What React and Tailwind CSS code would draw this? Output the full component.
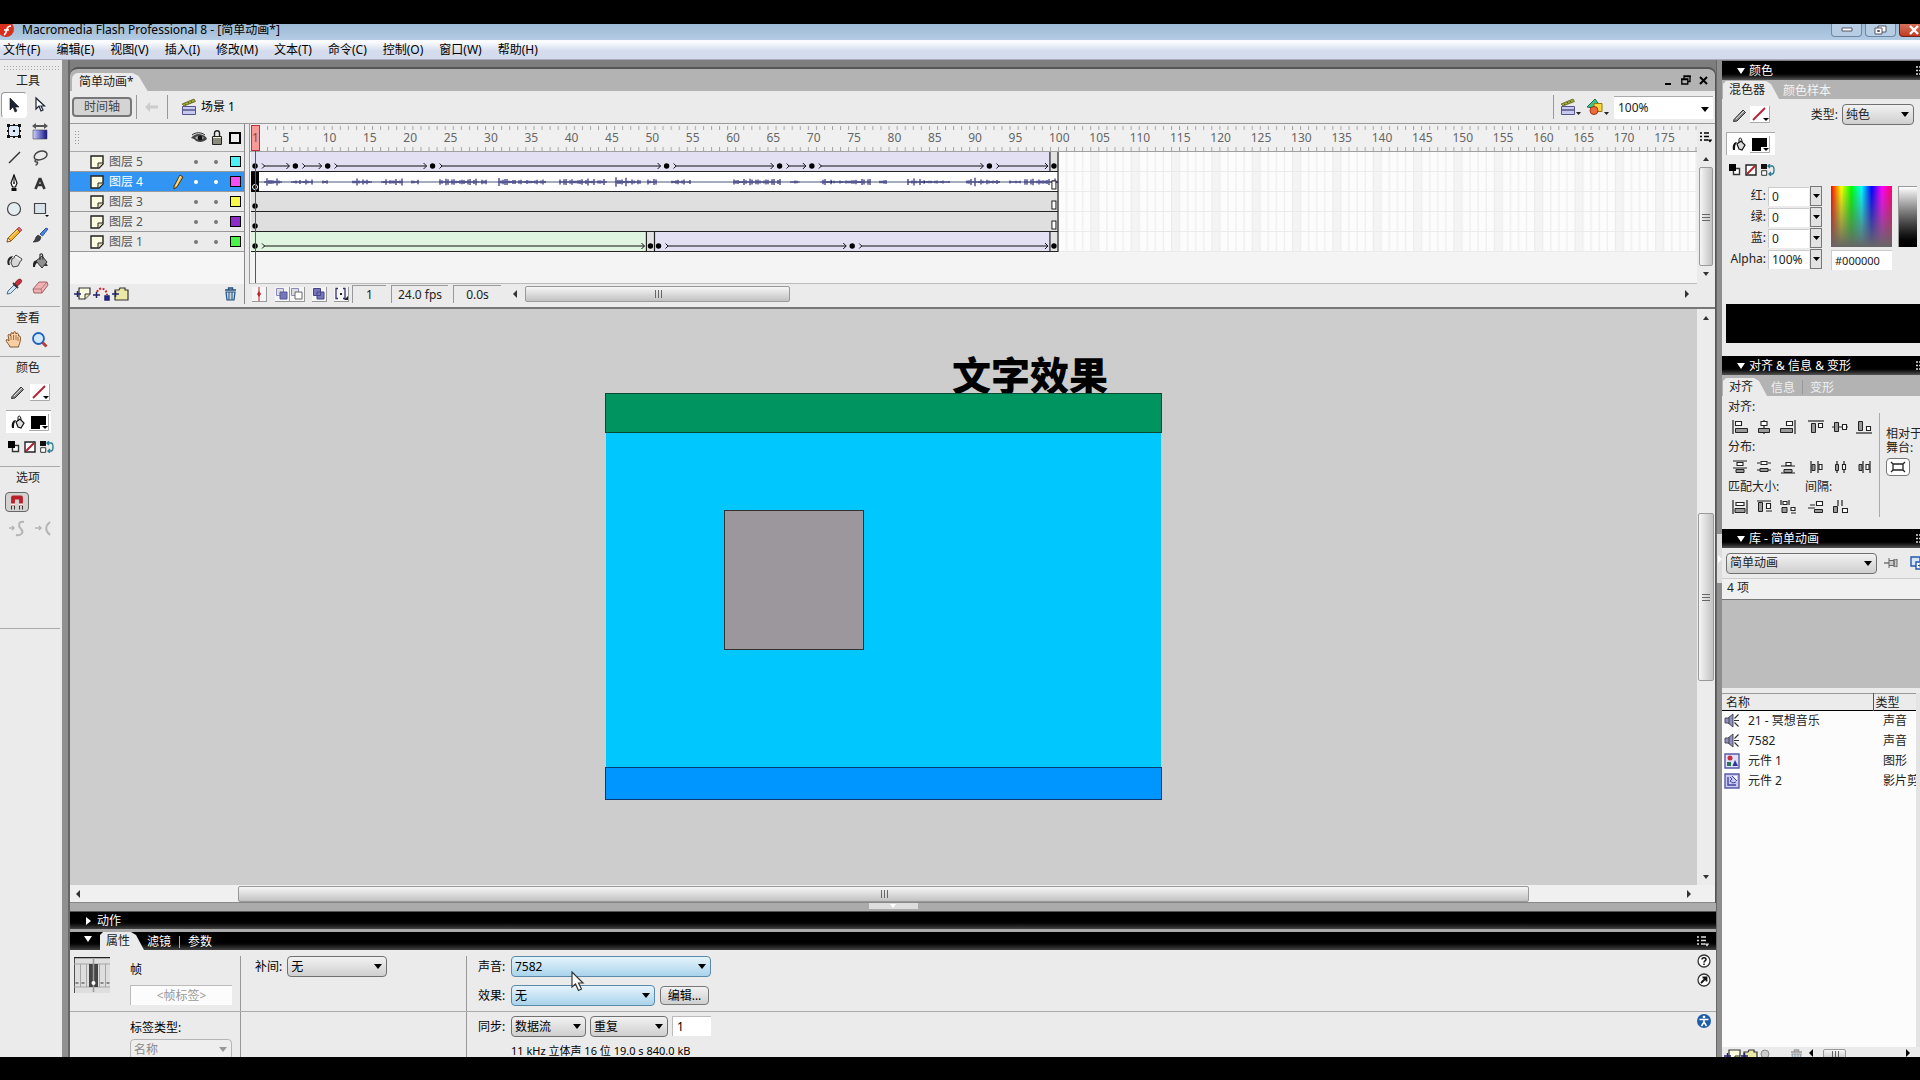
import React from "react";

const FRAME = 8.07;
const fx = (n) => 1 + (n - 1) * FRAME;
const mid = (n) => fx(n) + FRAME / 2;

const MENUS = ["文件(F)", "编辑(E)", "视图(V)", "插入(I)", "修改(M)", "文本(T)", "命令(C)", "控制(O)", "窗口(W)", "帮助(H)"];

const LAYERS = [
  { name: "图层 5", color: "bg-[#4ff0f4]" },
  { name: "图层 4", color: "bg-[#f44ff4]", active: true },
  { name: "图层 3", color: "bg-[#f8f84a]" },
  { name: "图层 2", color: "bg-[#8f2bc8]" },
  { name: "图层 1", color: "bg-[#4af24a]" },
];

const LIBRARY = [
  { name: "21 - 冥想音乐", type: "声音", icon: "sound" },
  { name: "7582", type: "声音", icon: "sound" },
  { name: "元件 1", type: "图形", icon: "graphic" },
  { name: "元件 2", type: "影片剪辑", icon: "clip" },
];

/* ---------- icons ---------- */

const Svg = ({ w = 18, h = 18, children, className = "" }) => (
  <svg width={w} height={h} viewBox={`0 0 ${w} ${h}`} fill="none" className={`block shrink-0 ${className}`} aria-hidden="true">
    {children}
  </svg>
);

const Down = ({ className = "text-black" }) => (
  <Svg w={8} h={5} className={className}><path d="M0 0h8L4 5z" fill="currentColor" /></Svg>
);
const Tri = ({ dir, className = "text-[#333]" }) => (
  <Svg w={8} h={8} className={className}>
    <path d={{ up: "M1 6l3-4 3 4z", down: "M1 2l3 4 3-4z", left: "M6 0L2 4l4 4z", right: "M2 0l4 4-4 4z" }[dir]} fill="currentColor" />
  </Svg>
);

const TOOLS = [
  ["选择", <Svg><path d="M5 2v12l3-3 2 5 2-1-2-4h4z" fill="#1a2436" stroke="#111" strokeWidth=".6" /></Svg>],
  ["部分选取", <Svg><path d="M5 2v11l3-3 2 5 2-1-2-4h3.500z" fill="#fff" stroke="#1a2436" strokeWidth="1.2" /></Svg>],
  ["任意变形", <Svg><path d="M3.500 3.500h11v11h-11z" stroke="#222" fill="#dcebf7" /><path d="M2 2h3v3H2zM13 2h3v3h-3zM2 13h3v3H2zM13 13h3v3h-3zM8 2h2v2H8zM8 14h2v2H8zM2 8h2v2H2zM14 8h2v2h-2zM8 8h2v2H8z" fill="#111" /></Svg>],
  ["填充变形", <Svg><defs><linearGradient id="ft"><stop stopColor="#cfd3ff" /><stop offset="1" stopColor="#10108a" /></linearGradient></defs><path d="M2 8h14v9H2z" fill="url(#ft)" stroke="#445" strokeWidth=".6" /><path d="M1 4l4-3v2h8V1l4 3-4 3V5H5v2z" fill="#555" /></Svg>],
  ["线条", <Svg><path d="M4 15L15 4" stroke="#333" strokeWidth="1.400" /></Svg>],
  ["套索", <Svg><path d="M5 12c-3-2-2-6 2-8 4-1.800 9-1 9 2.500S9 13 5.500 11.500c-2 0-2 3 0 2.500 2-.6 1 3-1 3" stroke="#444" strokeWidth="1.400" /></Svg>],
  ["钢笔", <Svg><path d="M9 1L6 9l1.500 4h3L12 9z" fill="#fff" stroke="#111" strokeWidth="1.200" /><path d="M9 1v7" stroke="#111" /><circle cx="9" cy="9" r="1" fill="#111" /><path d="M6.500 14h5v3h-5z" fill="#111" /></Svg>],
  ["文本", <Svg><path d="M9 4L4.500 15M9 4l4.500 11M6 11h6" stroke="#333" strokeWidth="2.600" /></Svg>],
  ["椭圆", <Svg><circle cx="9" cy="9" r="6.500" fill="#e3eef1" stroke="#444" strokeWidth="1.200" /></Svg>],
  ["矩形", <Svg><path d="M3.500 3.500h11v10h-11z" fill="#d8e4ea" stroke="#444" strokeWidth="1.200" /><path d="M14 15h4l-2 2z" fill="#000" /></Svg>],
  ["铅笔", <Svg><path d="M3 12L12 3l3 3-9 9-4 1z" fill="#f4b228" stroke="#8a4c0c" strokeWidth=".8" /><path d="M12 3l2-2 3 3-2 2z" fill="#d9646a" stroke="#8a2c2c" strokeWidth=".6" /><path d="M2 16l1-4 3 3z" fill="#fbe6c0" stroke="#70400f" strokeWidth=".7" /><path d="M5 12l8-8" stroke="#ffe28a" /></Svg>],
  ["刷子", <Svg><path d="M9 8l6-6 2 1-5.500 7z" fill="#4a86e0" stroke="#1c3c90" strokeWidth=".8" /><path d="M7 9l3 2-1 3c-2 2-5 2-7 2 2-1 2-3 3-5z" fill="#3d4048" stroke="#222" strokeWidth=".6" /></Svg>],
  ["墨水瓶", <Svg><path d="M3 13c-2-5 1-9 5-9l-2 3c-2 1-2 4-1 6z" fill="#222" /><path d="M7 7l5-3 4 4-3 6-5 1-2-4z" fill="#d8d8d8" stroke="#444" /><path d="M9 5l2-2 6 4-1 2" stroke="#444" fill="#eee" /></Svg>],
  ["颜料桶", <Svg><path d="M2 15c0-4 0-6 4-7l1 2c-2 1-3 3-3 5z" fill="#222" /><path d="M5 9l6-5 5 6-5 6z" fill="#8f8f8f" stroke="#333" /><path d="M9 8V2.500c2-2 3 0 3 5" stroke="#333" strokeWidth="1.200" /><path d="M15 11l2 3h-4z" fill="#333" /></Svg>],
  ["滴管", <Svg><path d="M3 13l6-6 2.500 2.500-6 6L2 16z" fill="#cfe6f5" stroke="#40607c" strokeWidth=".9" /><path d="M8 5l5 5" stroke="#333" strokeWidth="1.800" /><path d="M10 6c0-2 3-5 5-5 3 1 2 4-3 7z" fill="#c3323c" stroke="#5c1016" strokeWidth=".7" /></Svg>],
  ["橡皮擦", <Svg><path d="M2 11l6-7h8l1 3-6 8H3z" fill="#efb1b3" stroke="#96565a" strokeWidth=".9" /><path d="M2 11h8l6-7M10 11l1 4" stroke="#a9686c" strokeWidth=".8" /></Svg>],
];

const Hand = () => <Svg><path d="M5 16c-1-3-4-5-4-7 1-1 2 0 3 1L3 4c1-1.500 2 0 2.500 1L6 2c1-1 2 0 2 1l1-2c1-1 2 0 2 2l1-1c1 0 2 1 1.500 3l1 0c1 0 1 1 1 3 0 4-2 6-2 8z" fill="#f8cfa2" stroke="#7a4a24" strokeWidth=".9" /><path d="M6 5v4M8.500 4v5M11 4v5M13 6v4" stroke="#7a4a24" strokeWidth=".7" /></Svg>;
const Zoom = () => <Svg><circle cx="7.500" cy="7.500" r="5.500" fill="#cfeaff" stroke="#1f62c0" strokeWidth="1.800" /><path d="M11.500 11.500l4 4" stroke="#b04038" strokeWidth="3" /></Svg>;
const StrokePen = () => <Svg w={16} h={16}><path d="M2 12.500L11 3l2.500 2.500L5 14l-3.500.5z" fill="#888" stroke="#333" /><path d="M4 12l8-8" stroke="#ddd" /></Svg>;
const Bucket = () => <Svg w={16} h={16}><path d="M2 14C1 9 3 6 6 6l-1 2c-1 1-1 4-1 6z" fill="#111" /><path d="M6 8l4-3 4 4-3 5-3-1z" fill="#ddd" stroke="#111" strokeWidth="1.200" /><path d="M8 7V3c1-2 3-1 3 3" stroke="#111" /></Svg>;
const NoneSwatch = () => <Svg w={20} h={17}><path d="M0 0h20v17H0z" fill="#fff" /><path d="M19.500 0v16.500H0" stroke="#aaa" /><path d="M3 14L15 2" stroke="#b4243c" strokeWidth="2" /><path d="M13 12h6l-3 3z" fill="#000" /></Svg>;
const BlackSwatch = () => <Svg w={20} h={17}><path d="M0 0h20v17H0z" fill="#fff" /><path d="M19.500 0v16.500H0" stroke="#aaa" /><path d="M2 2h15v13H2z" fill="#000" /><path d="M11 11h8v5h-8z" fill="#fff" /><path d="M13 12h6l-3 3z" fill="#000" /></Svg>;
const BwIcon = () => <Svg w={12} h={12}><path d="M4.500 4.500h6v6h-6z" fill="#fff" stroke="#333" strokeWidth="1.400" /><path d="M0 0h7v7H0z" fill="#000" /></Svg>;
const NoColor = () => <Svg w={12} h={12}><path d="M1 1h10v10H1z" fill="#fff" stroke="#222" strokeWidth="1.400" /><path d="M2 10l8-8" stroke="#b4202c" strokeWidth="2" /></Svg>;
const SwapIcon = () => <Svg w={14} h={12}><path d="M0 0h6v5H0z" fill="#111" /><path d="M.7 6.700h5v4.600h-5z" fill="#fff" stroke="#333" /><path d="M7 2h4c2 0 2 3 2 4s0 4-2 4H8M9 0L7 2l2 2M10 8l-2 2 2 2" stroke="#2c7f92" strokeWidth="1.400" /></Svg>;
const Magnet = () => <Svg w={16} h={16}><path d="M4 12V3.500h8V12" stroke="#b81f28" strokeWidth="3.800" strokeLinejoin="round" /><path d="M2 10.500h4M10 10.500h4" stroke="#eee" strokeWidth="2" /><path d="M2.500 12v3.500M5.500 12v3.500M10.500 12v3.500M13.500 12v3.500" stroke="#333" /></Svg>;
const Smooth = () => <Svg w={18} h={18}><path d="M1 8h5M4 6l2 2-2 2" stroke="#b5b5b5" strokeWidth="1.500" /><path d="M16 2c-6-1-6 4-3 7s1 7-5 6" stroke="#b5b5b5" strokeWidth="2" /></Svg>;
const Straighten = () => <Svg w={18} h={18}><path d="M1 8h6M5 6l2 2-2 2" stroke="#b5b5b5" strokeWidth="1.500" /><path d="M16 2c-5 4-5 9 0 13" stroke="#b5b5b5" strokeWidth="2" /></Svg>;

const Clapper = () => <Svg w={16} h={18}><path d="M1.500 8.500h13v8h-13z" fill="#c9c9ef" stroke="#55558c" /><path d="M2 12h12" stroke="#55558c" strokeWidth="1.500" /><path d="M1 6l12-5 1.500 2.500L3 8z" fill="#a3a83a" stroke="#5e6420" strokeWidth=".8" /><path d="M4 5.500l1 1.500M7 4l1 1.500M10 3l1 1.500" stroke="#4e5418" /></Svg>;
const Shapes = () => <Svg w={18} h={18}><path d="M1 9l8-8 3 4-4 5z" fill="#3fc58a" stroke="#1a6c4c" /><path d="M8 5.500h8v8H8z" fill="#f5d83c" stroke="#93780f" /><circle cx="8" cy="12.500" r="4" fill="#ee6a3c" stroke="#9a3416" /></Svg>;
const LayerPage = () => <Svg w={14} h={14}><path d="M1 1h12v8l-4 4H1z" fill="#fbfbe2" stroke="#222" strokeWidth="1.400" /><path d="M13 8H8v5" fill="#e5e5b4" stroke="#222" /></Svg>;
const LayerPencil = () => <Svg w={12} h={16}><path d="M2 12L8 1l3 2-6 10-3 2z" fill="#f0b848" stroke="#3c2c10" strokeWidth=".9" /><path d="M8.500 2L4 12" stroke="#fff0b0" /></Svg>;
const Eye = () => <Svg w={16} h={12}><path d="M0 6c4-5 10-5 15-1l1 2c-4 4-10 4-13 0z" fill="#444" /><path d="M4 6c3-3 6-3 9 0-3 2-6 2-9 0z" fill="#bbb" /><circle cx="9" cy="6" r="2.400" fill="#111" /><path d="M1 3c4-3 9-3 13 0" stroke="#222" /></Svg>;
const Lock = () => <Svg w={12} h={15}><path d="M3.500 7V3c0-3 5-3 5 0v4" stroke="#222" strokeWidth="1.400" /><path d="M1.500 6.500h9v8h-9z" fill="#f4f4d8" stroke="#222" /><path d="M2 9h8M2 11h8M2 13h8" stroke="#222" /></Svg>;
const NewLayer = () => <Svg w={17} h={14}><path d="M5 1h11v6l-5 5H5z" fill="#fbfbe2" stroke="#333" strokeWidth="1.200" /><path d="M16 7h-5v5" stroke="#333" fill="#e5e5b4" /><path d="M0 7h7M3.500 4v6" stroke="#22226c" strokeWidth="1.500" /></Svg>;
const NewGuide = () => <Svg w={17} h={14}><path d="M4 5c2-5 9-5 10 3" stroke="#d02030" strokeWidth="2" strokeDasharray="2 1.500" /><path d="M0 8h7M3.500 5v6M12 9h4v4h-4z" stroke="#22226c" strokeWidth="1.500" fill="#22a" /></Svg>;
const NewFolder = () => <Svg w={17} h={14}><path d="M3 3h4l1-2h5v2h3v10H3z" fill="#ece9a8" stroke="#333" strokeWidth="1.200" /><path d="M0 7h7M3.500 4v6" stroke="#22226c" strokeWidth="1.500" /></Svg>;
const Trash = ({ c = "#24507c" }) => <Svg w={13} h={14}><path d="M1 3h11M4.500 3V1h4v2" stroke={c} strokeWidth="1.400" /><path d="M2 5h9l-1 8H3z" fill="#c7dcea" stroke={c} strokeWidth="1.200" /><path d="M5 5v8M8 5v8" stroke={c} /></Svg>;
const MenuGlyph = ({ className = "text-black" }) => <Svg w={12} h={11} className={className}><path d="M0 1h2M4 1h5M0 4.500h2M4 4.500h5M0 8h2M4 8h4" stroke="currentColor" strokeWidth="1.400" /><path d="M7.500 7.500h5L10 10.500z" fill="currentColor" /></Svg>;
const SoundIcon = () => <Svg w={16} h={15}><path d="M1 5h3l5-4v13L4 10H1z" fill="#8f8fc4" stroke="#444" strokeWidth=".9" /><path d="M5 4v7" stroke="#444" /><path d="M10 7.500h5M10.500 5.500l4-4M10.500 9.500l4 4" stroke="#333" strokeWidth="1.100" /></Svg>;
const GraphicIcon = () => <Svg w={16} h={16}><path d="M1 1h14v14H1z" fill="#dfe0fa" stroke="#5a5aa8" strokeWidth="1.400" /><circle cx="6" cy="5" r="2.500" fill="#c6303a" /><path d="M3 9h4v4H3z" fill="#24784c" /><path d="M11 7l3 6H8.500z" fill="#3434a0" /></Svg>;
const ClipIcon = () => <Svg w={16} h={16}><path d="M1 1h14v14H1z" fill="#c9caf2" stroke="#5a5aa8" strokeWidth="1.400" /><path d="M4 4v8h8" stroke="#4646a0" strokeWidth="1.400" /><path d="M6 4l2 2-2 2 3 2 3-1" stroke="#4646a0" /><path d="M9 3h4v4z" fill="#fff" /><path d="M8 3l5 5" stroke="#4646a0" /></Svg>;
const Pin = () => <Svg w={14} h={12}><path d="M0 6h5" stroke="#555" strokeWidth="1.200" /><path d="M5 1v10M5 3.500h5v5H5M10 2c1 1 2 1 3 0v8c-1-1-2-1-3 0z" fill="#ccc" stroke="#666" /></Svg>;
const NewLib = () => <Svg w={14} h={14}><path d="M1 1h9v9H1z" fill="#d4e6fa" stroke="#2458b0" strokeWidth="1.400" /><path d="M6 6h8v7H6z" fill="#fff" stroke="#2458b0" strokeWidth="1.400" /><path d="M8 9.500h5M10 7.500v4" stroke="#2458b0" /></Svg>;

const L = "#222";
const G = "#9a9a9a";
const A = ({ line, hollow, solid }) => (
  <Svg w={16} h={14}>
    <path d={solid} fill={G} stroke={L} />
    <path d={hollow} fill="#fff" stroke={L} strokeWidth="1.100" />
    <path d={line} stroke={L} strokeWidth="1.200" />
  </Svg>
);
const ALIGN_ROWS = [
  [
    { line: "M1 0v14", hollow: "M3.500 1.500h6v4h-6z", solid: "M3.500 8.500h12v4h-12z" },
    { line: "M8 0v2M8 5v3M8 12v2", hollow: "M5 1.500h6v4H5z", solid: "M2.500 8.500h11v4h-11z" },
    { line: "M15 0v14", hollow: "M6.500 1.500h6v4h-6z", solid: "M.5 8.500h12v4H.5z" },
    { line: "M0 1h16", hollow: "M10.500 3.500h4v4h-4z", solid: "M3.500 3.500h4v9h-4z" },
    { line: "M0 7h2M7 7h3M14 7h2", hollow: "M10.500 4.500h4v5h-4z", solid: "M2.500 2.500h4v9h-4z" },
    { line: "M0 13h16", hollow: "M10.500 6.500h4v4h-4z", solid: "M2.500 1.500h4v9h-4z" },
  ],
  [
    { line: "M1 1h14M1 8h14", hollow: "M5 2.500h6v3H5z", solid: "M4 9.500h8v3H4z" },
    { line: "M1 3h3M12 3h3M1 10h3M12 10h3", hollow: "M5 1.500h6v3H5z", solid: "M4 8.500h8v3H4z" },
    { line: "M1 6h14M1 13h14", hollow: "M6 2.500h5v3H6z", solid: "M4 9.500h8v3H4z" },
    { line: "M3 1v12M10 1v12", hollow: "M11 4.500h3v5h-3z", solid: "M4 4.500h3v6H4z" },
    { line: "M5 1v3M5 11v2M12 1v3M12 10v3", hollow: "M10.500 4.500h3v5h-3z", solid: "M3.500 4.500h3v6h-3z" },
    { line: "M7 1v12M14 1v12", hollow: "M10 4.500h3v5h-3z", solid: "M3 4.500h3v6H3z" },
  ],
  [
    { line: "M1 0v14M15 0v14", hollow: "M4 2.500h8v3H4z", solid: "M3 8.500h10v4H3z" },
    { line: "M1 1h14M10 11h6", hollow: "M10.500 3.500h4v5h-4z", solid: "M2.500 2.500h4v9h-4z" },
    { line: "M1 0v5M9 0v5M11 13h5", hollow: "M3 1.500h4v3H3zM11 7.500h4v3h-4z", solid: "M2 7.500h5v5H2z" },
    { line: "M0 8h7M2 5h5", hollow: "M8.500 1.500h6v4h-6z", solid: "M6.500 9.500h8v3h-8z" },
    { line: "M6 0v6M10 0v6", hollow: "M10.500 8.500h5v4h-5z", solid: "M1.500 6.500h4v6h-4z" },
  ],
];

/* ---------- shared controls ---------- */

const TONES = {
  gray: "border-[#707070] bg-linear-to-b from-[#f2f2f2] to-[#cfcfcf]",
  blue: "border-[#5b8aa8] bg-linear-to-b from-[#e6f4fc] to-[#a9d3ec]",
  off: "border-[#b5b5b5] bg-[#eeeeee] text-[#8a8a8a]",
};

function Select({ label, value, tone = "gray", className = "" }) {
  return (
    <span className={`relative block h-[21px] shrink-0 ${className}`}>
      <select aria-label={label} defaultValue={value} disabled={tone === "off"} className={`block h-full w-full appearance-none rounded-sm border pr-4 pl-[3px] leading-4 outline-none ${TONES[tone]}`}>
        <option>{value}</option>
      </select>
      <span className="pointer-events-none absolute top-2 right-[5px]">
        <Down className={tone === "off" ? "text-[#999]" : "text-black"} />
      </span>
    </span>
  );
}

const PanelTitle = ({ children }) => (
  <div className="flex h-[19px] items-center bg-linear-to-b from-black from-60% to-[#555] pl-[15px] text-white">
    <Svg w={8} h={6}><path d="M0 0h8L4 6z" fill="#fff" /></Svg>
    <h2 className="ml-1 flex-1 leading-4 whitespace-nowrap">{children}</h2>
    <Svg w={4} h={10}><path d="M0 1h2M3 1h1M0 4.500h2M3 4.500h1M0 8h2M3 8h1" stroke="#ddd" strokeWidth="1.400" /></Svg>
  </div>
);

const Tab = ({ children, className = "" }) => (
  <button className={`flex h-[18px] items-center bg-[#ebebeb] pr-3.5 pl-1.5 whitespace-nowrap text-[#222] [clip-path:polygon(0_3px,3px_0,calc(100%-13px)_0,calc(100%-8px)_3px,100%_100%,0_100%)] ${className}`}>
    {children}
  </button>
);

const ColorExtras = ({ className = "" }) => (
  <div className={`flex items-center gap-1 ${className}`}>
    <button aria-label="黑白"><BwIcon /></button>
    <button aria-label="没有颜色"><NoColor /></button>
    <button aria-label="交换颜色"><SwapIcon /></button>
  </div>
);

/* ---------- left toolbar ---------- */

function Toolbox() {
  return (
    <aside className="w-[62px] shrink-0 bg-[#ebebeb] pt-[5px] text-center">
      <div className="mx-[3px] h-[5px] bg-[radial-gradient(#aaa_1px,transparent_1px)] bg-size-[3px_3px]" />
      <h2 className="mt-[3px] w-14 leading-4">工具</h2>
      <div className="mt-[3px] ml-px grid w-[52px] grid-cols-2">
        {TOOLS.map(([name, icon], i) => (
          <button key={name} aria-label={name} className={`flex h-[26px] items-center justify-center ${i === 0 ? "rounded-sm border border-t-[#999] border-r-white border-b-white border-l-[#999] bg-white" : ""}`}>
            {icon}
          </button>
        ))}
      </div>
      <section className="mt-1.5 mr-0.5 border-t border-[#aaa]">
        <h2 className="mt-[3px] w-14 leading-4">查看</h2>
        <div className="ml-px grid h-7 w-[52px] grid-cols-2 place-items-center">
          <button aria-label="手形"><Hand /></button>
          <button aria-label="缩放"><Zoom /></button>
        </div>
      </section>
      <section className="mt-0.5 mr-0.5 h-[110px] border-t border-[#aaa]">
        <h2 className="mt-[3px] w-14 leading-4">颜色</h2>
        <div className="ml-2.5 flex h-8 items-center gap-1">
          <StrokePen /><button aria-label="笔触颜色"><NoneSwatch /></button>
        </div>
        <div className="mt-0.5 ml-1.5 flex h-[23px] w-[45px] items-center gap-[3px] border-t border-[#aaa] bg-white pl-1">
          <Bucket /><button aria-label="填充颜色"><BlackSwatch /></button>
        </div>
        <ColorExtras className="mt-2 ml-2" />
      </section>
      <section className="mr-0.5 h-[162px] border-t border-[#aaa]">
        <h2 className="mt-[3px] w-14 leading-4">选项</h2>
        <button aria-label="贴紧至对象" className="mt-1.5 ml-[5px] flex h-5 w-6 items-center justify-center rounded-sm border border-[#666] bg-[#d2d2d2]"><Magnet /></button>
        <div className="mt-2 ml-2 flex gap-2">
          <button aria-label="平滑"><Smooth /></button>
          <button aria-label="伸直"><Straighten /></button>
        </div>
      </section>
      <div className="mr-0.5 border-t border-[#aaa]" />
    </aside>
  );
}

/* ---------- timeline ---------- */

const ROW_TOP = (r) => 28 + r * 20;

function Tween({ row, from, to }) {
  const y = ROW_TOP(row) + 14;
  const a = mid(from) + 7;
  const b = mid(to) - 6;
  return (
    <g stroke="#111" fill="none">
      <path d={`M${a + 2} ${y}H${b}`} strokeWidth="1.200" />
      <path d={`M${a} ${y - 2.5}l2.500 2.500-2.500 2.500M${b - 3} ${y - 3}l3 3-3 3`} />
    </g>
  );
}

const Key = ({ row, at }) => <circle cx={mid(at)} cy={ROW_TOP(row) + 14} r="2.700" fill="#000" />;

const BURSTS = [
  [15, 31, 4], [42, 62, 2], [73, 77, 2], [103, 122, 3], [132, 152, 3], [162, 168, 2], [190, 237, 3], [249, 258, 5], [259, 295, 2],
  [310, 357, 3], [366, 380, 5], [380, 391, 2], [398, 406, 3], [422, 440, 2], [484, 530, 3], [541, 550, 1], [571, 581, 3], [582, 600, 1],
  [600, 620, 3], [630, 636, 2], [658, 675, 3], [675, 700, 1], [717, 727, 5], [727, 750, 2], [760, 770, 1], [775, 807, 3],
];
const WAVE = BURSTS.map(([a, b, amp]) => {
  let d = "";
  for (let x = a; x <= b; x += 2) {
    const k = Math.abs(Math.sin(x * 12.9898) * Math.cos(x * 3.7));
    const h = 0.6 + amp * k;
    d += `M${x} ${58 - h}V${58 + h}`;
  }
  return d;
}).join("");

const LABELS = Array.from({ length: 35 }, (_, i) => (i + 1) * 5);
const TWEENS = [[1, 6], [6, 10], [10, 23], [23, 52], [52, 66], [66, 70], [70, 92], [92, 100]];

function Frames() {
  const end = fx(101);
  return (
    <svg className="block h-[159px] w-full" aria-label="时间轴帧">
      <defs>
        <pattern id="ticks" x="1" width={FRAME} height="28" patternUnits="userSpaceOnUse">
          <path d="M.5 2v4M.5 23v4" stroke="#a5a5a5" />
        </pattern>
        <pattern id="cells" x={fx(100)} y="28" width={FRAME * 5} height="20" patternUnits="userSpaceOnUse">
          <path d={`M0 0h${FRAME * 5}v20H0z`} fill="#fcfcfc" />
          <path d={`M0 0h${FRAME}v20H0z`} fill="#f4f4f4" />
          <path d={[0, 1, 2, 3, 4].map((i) => `M${i * FRAME + 0.5} 0v20`).join("") + `M0 19.500h${FRAME * 5}`} stroke="#ebebeb" />
        </pattern>
      </defs>
      <rect width="100%" height="161" fill="#f4f4f4" />
      <rect width="100%" height="28" fill="#f0f0f0" />
      <rect x="16" width="100%" height="28" fill="url(#ticks)" />
      <rect y="27" width="100%" height="1" fill="#a0a0a0" />
      <rect x={end} y="28" width="100%" height="100" fill="url(#cells)" />

      <rect x="1" y="28" width={fx(100) - 1} height="20" fill="#e2e0f2" />
      <rect x={fx(100)} y="28" width={FRAME} height="20" fill="#e2e2e2" />
      <rect x="1" y="48" width={end - 1} height="20" fill="#fff" />
      <rect x="1" y="68" width={end - 1} height="40" fill="#dfdfdf" />
      <rect x="1" y="108" width={fx(50) - 1} height="20" fill="#e0f5df" />
      <rect x={fx(50)} y="108" width={FRAME} height="20" fill="#e2e2e2" />
      <rect x={fx(51)} y="108" width={fx(100) - fx(51)} height="20" fill="#e2e0f2" />
      <rect x={fx(100)} y="108" width={FRAME} height="20" fill="#e2e2e2" />
      {[0, 1, 2, 3, 4].map((r) => <rect key={r} x="1" y={ROW_TOP(r) + 19} width={end - 1} height="1" fill="#222" />)}
      <path d={`M${fx(100)} 28v20M${fx(100)} 108v20M${fx(50)} 108v20M${fx(51)} 108v20M${end} 28v100`} stroke="#222" strokeWidth="1.200" />

      <path d={`M${fx(2)} 58H${end}`} stroke="#4a5878" />
      <path d={WAVE} stroke="#14146c" strokeWidth="1.100" />
      <rect x="1" y="48" width="8" height="20" fill="#000" />
      <circle cx={mid(1)} cy="63" r="2.500" fill="none" stroke="#fff" />

      {TWEENS.map(([a, b]) => <g key={a}><Tween row={0} from={a} to={b} /><Key row={0} at={a} /></g>)}
      <Key row={0} at={100} />
      {[[1, 50], [51, 75], [75, 100]].map(([a, b]) => <g key={a}><Tween row={4} from={a} to={b} /><Key row={4} at={a} /></g>)}
      <Key row={4} at={50} /><Key row={4} at={100} />
      <Key row={2} at={1} /><Key row={3} at={1} />
      {[1, 2, 3].map((r) => <rect key={r} x={fx(100) + 2} y={ROW_TOP(r) + 9} width="4" height="8" fill="#fff" stroke="#222" />)}

      <rect x="1.500" y="1.500" width="8" height="25" fill="#f99a9a" stroke="#c03038" />
      <path d="M5.500 27v134" stroke="#cc2430" />
      <g fill="#666" className="text-[12px]">
        <text x="2" y="18" fill="#a03a3a">1</text>
        {LABELS.map((n) => <text key={n} x={fx(n) - 1} y="18">{n}</text>)}
      </g>
    </svg>
  );
}

const Thumb = ({ vertical, className = "" }) => (
  <div className={`flex items-center justify-center rounded-xs border border-[#999] ${vertical ? "bg-linear-to-r" : "bg-linear-to-b"} from-[#f6f6f6] to-[#c2c2c2] ${className}`}>
    <Svg w={8} h={8}><path d={vertical ? "M0 1.500h8M0 4.500h8M0 7.500h8" : "M1.500 0v8M4.500 0v8M7.500 0v8"} stroke="#666" /></Svg>
  </div>
);

const Readout = ({ children, className = "" }) => (
  <span className={`flex h-[18px] items-center justify-center border-t border-l border-[#999] text-[#222] ${className}`}>{children}</span>
);

const ONION = [
  ["居中播放头", "mr-2", <Svg w={14} h={14}><path d="M7 0v14" stroke="#c0222c" /><path d="M7 4l2 3-2 3-2-3z" fill="#c0222c" /></Svg>],
  ["绘图纸外观", "", <Svg w={14} h={14}><path d="M1.500 1.500h7v7h-7z" fill="#ddd" stroke="#8a8ac0" /><path d="M5 5h7v7H5z" fill="#7676b8" stroke="#55559c" /></Svg>],
  ["绘图纸外观轮廓", "mr-[7px]", <Svg w={14} h={14}><path d="M1.500 1.500h7v7h-7z" fill="#ddd" stroke="#8a8ac0" /><path d="M5 5h7v7H5z" fill="#fff" stroke="#666" /></Svg>],
  ["编辑多个帧", "mr-[7px]", <Svg w={14} h={14}><path d="M1.500 1.500h7v7h-7zM5 5h7v7H5z" fill="#7676b8" stroke="#44448c" /></Svg>],
  ["修改绘图纸标记", "mr-[3px]", <Svg w={14} h={14}><path d="M4 1.500H2v10h2M9 1.500h2v10H9" stroke="#33336c" strokeWidth="1.300" /><path d="M6 6h2v2H6zM10 13h4v-4z" fill="#222" /></Svg>],
];

function Timeline() {
  return (
    <section className="flex h-[186px] shrink-0 flex-col border-t border-b-2 border-t-[#999] border-b-[#777] bg-[#ebebeb]">
      <div className="flex">
        <div className="w-[175px] shrink-0 border-r border-[#888] bg-[#f6f6f6]">
          <div className="flex h-7 items-center border-b border-[#aaa] bg-[#ebebeb] pl-1">
            <div className="h-4 flex-1"><div className="h-full w-[5px] bg-[radial-gradient(#999_1px,transparent_1px)] bg-size-[3px_3px]" /></div>
            <Eye />
            <span className="ml-1"><Lock /></span>
            <span className="mr-[3px] ml-1.5 size-3 border-2 border-black bg-[#eee]" />
          </div>
          {LAYERS.map((l) => (
            <div key={l.name} className={`flex h-5 items-center border-b border-[#999] pl-5 ${l.active ? "bg-[#3295f4] text-white" : "bg-[#ebebeb] text-[#555]"}`}>
              <LayerPage />
              <span className="ml-[5px] flex-1 leading-4">{l.name}</span>
              {l.active && <span className="mr-2.5"><LayerPencil /></span>}
              <span className={`mr-4 size-1 rounded-full ${l.active ? "bg-white" : "bg-[#777]"}`} />
              <span className={`mr-3 size-1 rounded-full ${l.active ? "bg-white" : "bg-[#777]"}`} />
              <span className={`mr-[3px] size-[11px] border border-black ${l.color}`} />
            </div>
          ))}
        </div>
        <div className="w-[5px] shrink-0 border-r border-[#999]" />
        <div className="min-w-0 flex-1 border-b border-[#bbb]"><Frames /></div>
        <div className="flex w-[18px] shrink-0 flex-col items-center">
          <button aria-label="帧视图" className="mt-2 mb-3"><MenuGlyph /></button>
          <Tri dir="up" />
          <Thumb vertical className="my-1 w-[14px] flex-1" />
          <Tri dir="down" className="mb-1.5 text-[#333]" />
        </div>
      </div>
      <div className="flex h-5 items-center">
        <div className="flex h-full w-[175px] items-center gap-0.5 border-r border-[#888] pl-1">
          <button aria-label="插入图层"><NewLayer /></button>
          <button aria-label="添加运动引导层"><NewGuide /></button>
          <button aria-label="插入图层文件夹"><NewFolder /></button>
          <button aria-label="删除图层" className="mr-[7px] ml-auto"><Trash /></button>
        </div>
        <div className="flex pl-[7px]">
          {ONION.map(([name, gap, icon]) => (
            <button key={name} aria-label={name} className={`border-r border-b border-[#999] bg-[#f5f5f5] ${gap}`}>{icon}</button>
          ))}
        </div>
        <Readout className="w-[34px]">1</Readout>
        <Readout className="ml-[5px] w-[57px]">24.0 fps</Readout>
        <Readout className="ml-[5px] w-12">0.0s</Readout>
        <div className="ml-1.5 flex h-[18px] flex-1 items-center pl-1">
          <Tri dir="left" />
          <Thumb className="ml-1.5 h-4 w-[265px]" />
          <Tri dir="right" className="mr-6 ml-auto text-[#333]" />
        </div>
      </div>
    </section>
  );
}

/* ---------- document window ---------- */

function DocumentWindow() {
  return (
    <main className="flex min-h-0 flex-1 flex-col overflow-hidden rounded-t-lg border-t-2 border-r border-[#555] bg-[#b3b3b3]">
      <div className="flex h-[22px] shrink-0 items-end pl-0.5">
        <button className="flex h-[18px] items-center rounded-tl-md bg-[#ebebeb] pr-3.5 pl-[7px] text-[#222] [clip-path:polygon(0_0,calc(100%-15px)_0,calc(100%-9px)_3px,100%_100%,0_100%)]">简单动画*</button>
        <div className="mr-[7px] mb-1.5 ml-auto flex items-end gap-2 text-black">
          <button aria-label="最小化文档"><Svg w={9} h={10}><path d="M1 9h6" stroke="currentColor" strokeWidth="2" /></Svg></button>
          <button aria-label="还原文档"><Svg w={10} h={10}><path d="M.8 4h6v5h-6zM3 4V1h6v5.500H7M0 4.500h7M3 1.500h7" stroke="currentColor" strokeWidth="1.300" /></Svg></button>
          <button aria-label="关闭文档"><Svg w={9} h={10}><path d="M1 2l7 7M8 2L1 9" stroke="currentColor" strokeWidth="2" /></Svg></button>
        </div>
      </div>
      <div className="flex h-8 shrink-0 items-center bg-[#ebebeb] pl-0.5">
        <button className="h-5 w-[60px] rounded-sm border-2 border-[#777] bg-[#d4d4d4] leading-4 text-[#444]">时间轴</button>
        <span className="ml-1 h-6 w-px bg-[#999]" />
        <button aria-label="返回" className="mx-2"><Svg w={14} h={12}><path d="M0 6l5-5v3.500h8v3H5V11z" fill="#ccc" /></Svg></button>
        <span className="h-6 w-px bg-[#999]" />
        <span className="ml-[13px]"><Clapper /></span>
        <span className="ml-1 text-black">场景 1</span>
        <span className="mr-1.5 ml-auto h-6 w-px bg-[#999]" />
        <button aria-label="编辑场景" className="flex items-end"><Clapper /><Svg w={6} h={4}><path d="M0 0h5L2.500 3z" fill="#222" /></Svg></button>
        <button aria-label="编辑元件" className="ml-1 flex items-end"><Shapes /><Svg w={6} h={4}><path d="M0 0h5L2.500 3z" fill="#222" /></Svg></button>
        <span className="relative mr-0.5 ml-1 block h-[23px] w-[99px] border-t border-[#aaa] bg-white">
          <select aria-label="缩放比率" defaultValue="100%" className="block h-full w-full appearance-none bg-transparent pl-1 outline-none"><option>100%</option></select>
          <span className="pointer-events-none absolute top-2.5 right-1"><Down /></span>
        </span>
      </div>
      <Timeline />
      <div className="flex min-h-0 flex-1">
        <div className="relative min-w-0 flex-1 overflow-hidden bg-[#cdcdcd]">
          <p className="absolute top-[38px] left-[882px] text-[39px] leading-[56px] font-black whitespace-nowrap text-black">文字效果</p>
          <div className="absolute top-[124px] left-[536px] h-[336px] w-[555px] bg-[#00c8ff]" />
          <div className="absolute top-[84px] left-[535px] h-10 w-[557px] border border-[#0a4a34] bg-[#009560]" />
          <div className="absolute top-[201px] left-[654px] h-[140px] w-[140px] border border-[#333] bg-[#9c979c]" />
          <div className="absolute top-[458px] left-[535px] h-[33px] w-[557px] border border-[#0a3a70] bg-[#0096ff]" />
        </div>
        <div className="flex w-[18px] flex-col items-center bg-[#ececec] pt-[5px] pb-1">
          <Tri dir="up" />
          <Thumb vertical className="mt-[191px] h-[168px] w-4" />
          <Tri dir="down" className="mt-auto text-[#333]" />
        </div>
      </div>
      <div className="flex h-[18px] shrink-0 items-center border-b border-[#888] bg-[#f0f0f0] pl-1">
        <Tri dir="left" />
        <Thumb className="ml-[156px] h-4 max-w-[1291px] flex-1" />
        <Tri dir="right" className="mr-[22px] ml-auto text-[#333]" />
      </div>
    </main>
  );
}

/* ---------- property inspector ---------- */

function FrameThumb() {
  return (
    <Svg w={36} h={36}>
      <path d="M0 0h36v36H0z" fill="#dedede" />
      <path d="M0 36V.5h36" stroke="#222" strokeWidth="1.500" />
      <path d="M0 7h36M0 30h36M6.500 7v23M12.500 7v23M25.500 7v23M31.500 7v23" stroke="#a5a5a5" />
      <path d="M15 7h9v23h-9z" fill="#444" />
      <path d="M19.500 2v33" stroke="#999" strokeWidth="1.500" />
      <circle cx="19.500" cy="26" r="2" fill="#fff" />
      <path d="M3 25v2M9 25v2M28 25v2M34 25v2" stroke="#888" strokeWidth="3" />
    </Svg>
  );
}

function Properties() {
  return (
    <section className="relative flex min-h-[107px] bg-[#ebebeb] text-black">
      <div className="absolute top-[61px] right-0 left-0 border-t border-[#aaa]" />
      <div className="flex w-[170px] pt-[7px] pl-1">
        <FrameThumb />
        <div className="ml-5 flex w-[102px] flex-col">
          <h3 className="mt-[5px] leading-4">帧</h3>
          <input aria-label="帧标签" placeholder="<帧标签>" className="mt-[7px] h-5 border-t border-l border-[#bbb] bg-[#fcfcfc] text-center outline-none placeholder:text-[#999]" />
          <span className="mt-[15px] leading-4">标签类型:</span>
          <Select label="标签类型" value="名称" tone="off" className="mt-[3px]" />
        </div>
      </div>
      <div className="my-1.5 -mb-1 w-[227px] border-r border-l border-[#999] pl-[14px]">
        <div className="flex items-center gap-[5px]">
          <span>补间:</span><Select label="补间" value="无" className="w-[100px]" />
        </div>
      </div>
      <div className="relative grid grid-cols-[29px_200px] content-start items-center gap-x-1 pt-1.5 pl-[11px]">
        <span>声音:</span>
        <Select label="声音" value="7582" tone="blue" />
        <span className="mt-2">效果:</span>
        <div className="mt-2 flex gap-[5px]">
          <Select label="效果" value="无" tone="blue" className="w-[144px]" />
          <button className="my-px h-[19px] w-[49px] rounded-sm border border-[#777] bg-linear-to-b from-[#f2f2f2] to-[#cfcfcf] leading-4">编辑...</button>
        </div>
        <span className="mt-2.5">同步:</span>
        <div className="mt-2.5 flex gap-1">
          <Select label="同步" value="数据流" className="w-[75px]" />
          <Select label="声音循环" value="重复" className="w-[78px]" />
          <input aria-label="循环次数" defaultValue="1" className="h-5 w-[39px] border-t border-l border-[#bbb] bg-white pl-1 outline-none" />
        </div>
        <p className="col-start-2 mt-1.5 text-[11px] leading-4 whitespace-nowrap">11 kHz 立体声 16 位 19.0 s 840.0 kB</p>
        <svg width="14" height="21" viewBox="0 0 14 21" className="absolute top-[21px] left-[104px]" aria-hidden="true">
          <path d="M1 1v15l3.500-3 3 6.500 3-1.500-3-6H12z" fill="#fff" stroke="#333" strokeWidth="1.200" />
        </svg>
      </div>
      <div className="mr-[5px] ml-auto flex flex-col items-center gap-[5px] pt-1">
        <button aria-label="帮助"><Svg w={14} h={14}><circle cx="7" cy="7" r="6" fill="#fff" stroke="#333" strokeWidth="1.300" /><path d="M5 5.500c0-2.500 4-2.500 4 0 0 1.300-2 1.300-2 3M7 9.500v1.500" stroke="#111" strokeWidth="1.500" /></Svg></button>
        <button aria-label="展开"><Svg w={14} h={14}><circle cx="7" cy="7" r="6" fill="#fff" stroke="#333" strokeWidth="1.300" /><path d="M4 10l5-5M5.500 4.500h4v4" stroke="#111" strokeWidth="1.800" /></Svg></button>
        <button aria-label="辅助功能" className="mt-[22px]"><Svg w={14} h={14}><circle cx="7" cy="7" r="7" fill="#1f5ca8" /><circle cx="7" cy="3" r="1.300" fill="#fff" /><path d="M2.500 5.500h9M7 5v4M7 8l-2.500 4M7 8l2.500 4" stroke="#fff" strokeWidth="1.500" /></Svg></button>
      </div>
    </section>
  );
}

function BottomPanels() {
  return (
    <div className="h-[154px] shrink-0 overflow-hidden bg-[#ababab]">
      <div className="flex h-2 justify-center">
        <button aria-label="折叠面板" className="flex h-1.5 w-[49px] items-center justify-center bg-[#ddd]"><Svg w={8} h={4}><path d="M1 0h6L4 4z" fill="#fff" /></Svg></button>
      </div>
      <div className="mb-[3px] flex h-[18px] items-center border-t border-[#555] bg-linear-to-b from-black from-50% to-[#444] pl-4 text-white">
        <Svg w={6} h={8}><path d="M0 0v8l5-4z" fill="#fff" /></Svg>
        <h2 className="ml-[5px] leading-4">动作</h2>
      </div>
      <div className="flex h-[18px] items-end bg-linear-to-b from-black from-50% to-[#444] pr-[7px] pl-3.5 text-white">
        <span className="mb-2"><Svg w={8} h={6}><path d="M0 0h8L4 6z" fill="#fff" /></Svg></span>
        <Tab className="ml-2">属性</Tab>
        <button className="ml-[3px] leading-4">滤镜</button>
        <span className="mx-2 mb-0.5 h-3 w-px bg-[#aaa]" />
        <button className="leading-4">参数</button>
        <button aria-label="面板菜单" className="mb-[3px] ml-auto"><MenuGlyph className="text-[#ddd]" /></button>
      </div>
      <Properties />
    </div>
  );
}

/* ---------- right panels ---------- */

const Channel = ({ label, value }) => (
  <label className="mb-px flex h-5 items-center justify-end">
    <span className="mr-0.5 whitespace-nowrap">{label}:</span>
    <input defaultValue={value} className="h-[19px] w-[41px] border-t border-l border-[#ccc] bg-white pl-[3px] outline-none" />
    <span className="ml-px flex h-5 w-3 items-center justify-center border border-[#777] bg-[#e2e2e2]"><Svg w={7} h={4}><path d="M0 0h7L3.500 4z" fill="#000" /></Svg></span>
  </label>
);

function Mixer() {
  return (
    <section className="bg-[#ebebeb]">
      <PanelTitle>颜色</PanelTitle>
      <div className="flex h-[19px] items-end bg-[#b3b3b3] pl-px">
        <Tab>混色器</Tab>
        <button className="ml-1 text-[#f4f4f4]">颜色样本</button>
      </div>
      <div className="flex h-[31px] items-center pl-2.5">
        <StrokePen />
        <button aria-label="笔触颜色" className="ml-0.5"><NoneSwatch /></button>
        <span className="mr-1 ml-auto">类型:</span>
        <Select label="类型" value="纯色" className="mr-1.5 w-[72px]" />
      </div>
      <div className="mt-0.5 ml-1 flex h-[23px] w-[49px] items-center gap-[3px] border-t border-l border-[#aaa] bg-white pl-1">
        <Bucket /><button aria-label="填充颜色"><BlackSwatch /></button>
      </div>
      <ColorExtras className="mt-[9px] ml-[7px]" />
      <div className="mt-2.5 flex">
        <div className="w-[100px]">
          <Channel label="红" value="0" />
          <Channel label="绿" value="0" />
          <Channel label="蓝" value="0" />
          <Channel label="Alpha" value="100%" />
        </div>
        <div className="ml-[9px] w-[61px]">
          <div className="h-[61px] bg-[linear-gradient(to_bottom,transparent,#666),linear-gradient(to_right,#f00,#ff0,#0f0,#0ff,#00f,#f0f,#f06)]" />
          <input aria-label="十六进制颜色" defaultValue="#000000" className="mt-[3px] h-5 w-full border-t border-l border-[#ccc] bg-white pl-[3px] text-[11px] outline-none" />
        </div>
        <div className="ml-1.5 h-[61px] w-[19px] border-t border-l border-[#999] bg-linear-to-b from-white to-black" />
      </div>
      <div className="mt-[34px] mb-[13px] ml-1 h-[39px] bg-black" />
    </section>
  );
}

const IconRow = ({ items }) => (
  <div className="flex h-5 items-center pl-2.5">
    {items.map((it, i) => (
      <button key={i} aria-label={`对齐 ${i + 1}`} className={i === 2 ? "mr-3" : "mr-2"}><A {...it} /></button>
    ))}
  </div>
);

function Align() {
  return (
    <section className="bg-[#ebebeb]">
      <PanelTitle>对齐 &amp; 信息 &amp; 变形</PanelTitle>
      <div className="flex h-[21px] items-end bg-[#b3b3b3] pl-px text-[#f0f0f0]">
        <Tab>对齐</Tab>
        <button className="ml-1">信息</button>
        <span className="mx-[7px] mb-0.5 h-3.5 w-px bg-[#999]" />
        <button>变形</button>
      </div>
      <div className="flex h-[133px] pt-px">
        <div className="w-[157px] shrink-0">
          <h3 className="pl-1.5 leading-5">对齐:</h3>
          <IconRow items={ALIGN_ROWS[0]} />
          <h3 className="pl-1.5 leading-5">分布:</h3>
          <IconRow items={ALIGN_ROWS[1]} />
          <div className="flex pl-1.5 leading-5"><h3 className="w-[77px]">匹配大小:</h3><h3>间隔:</h3></div>
          <IconRow items={ALIGN_ROWS[2]} />
        </div>
        <div className="mt-4 mb-3 border-l border-[#aaa] pt-3.5 pl-1.5">
          <p className="w-[42px] leading-[14px] whitespace-nowrap">相对于<br />舞台:</p>
          <button aria-label="相对于舞台" className="mt-[3px] flex h-[18px] w-6 items-center justify-center rounded-sm border border-[#777] bg-white"><Svg w={16} h={12}><path d="M3 3h10v6H3zM1 1l2 2M15 1l-2 2M1 11l2-2M15 11l-2-2" stroke="#222" strokeWidth="1.300" /></Svg></button>
        </div>
      </div>
    </section>
  );
}

function Library() {
  const icons = { sound: <SoundIcon />, graphic: <GraphicIcon />, clip: <ClipIcon /> };
  return (
    <section className="flex min-h-0 flex-1 flex-col bg-[#ebebeb]">
      <PanelTitle>库 - 简单动画</PanelTitle>
      <div className="flex h-[31px] shrink-0 items-center border-b border-[#ccc] pl-1">
        <Select label="库" value="简单动画" className="w-[151px]" />
        <button aria-label="固定当前库" className="ml-[7px]"><Pin /></button>
        <button aria-label="新建库面板" className="ml-3"><NewLib /></button>
      </div>
      <p className="h-[21px] shrink-0 border-b border-[#777] bg-[#f0f0f0] pl-[5px] leading-[18px]">4 项</p>
      <div className="h-[88px] shrink-0 bg-[#bdbdbd]" />
      <div className="mt-[5px] flex min-h-0 flex-1">
        <div className="flex min-w-0 flex-1 flex-col overflow-hidden bg-[#fcfcfc]">
          <table className="w-full table-fixed border-collapse text-left">
            <thead className="h-[17px] border-t border-b border-t-[#999] border-b-black bg-[#ebebeb]">
              <tr>
                <th className="w-[151px] border-r border-[#555] pl-1 leading-[15px] font-normal">名称</th>
                <th className="pl-0.5 leading-[15px] font-normal">类型</th>
              </tr>
            </thead>
            <tbody>
              {LIBRARY.map((r) => (
                <tr key={r.name} className="h-5">
                  <td><span className="flex items-center gap-2 pl-0.5 leading-4">{icons[r.icon]}{r.name}</span></td>
                  <td className="overflow-hidden pl-2.5 leading-4 whitespace-nowrap">{r.type}</td>
                </tr>
              ))}
            </tbody>
          </table>
        </div>
        <div className="w-1 bg-[#e4e4e4]" />
      </div>
      <div className="flex h-2.5 shrink-0 items-start overflow-hidden pt-0.5 pl-0.5">
        <button aria-label="新建元件"><NewLayer /></button>
        <button aria-label="新建文件夹"><NewFolder /></button>
        <button aria-label="属性" className="ml-0.5"><Svg w={10} h={12}><circle cx="5" cy="5" r="4" fill="#ccc" stroke="#888" /></Svg></button>
        <button aria-label="删除" className="ml-5"><Trash c="#999" /></button>
        <Tri dir="left" className="ml-1 text-black" />
        <Thumb className="ml-2 h-3 w-[23px]" />
        <Tri dir="right" className="mr-2 ml-auto text-black" />
      </div>
    </section>
  );
}

/* ---------- application ---------- */

export default function App() {
  return (
    <div className="flex h-screen flex-col overflow-hidden bg-black pt-6 pb-[23px] font-['Noto_Sans','Noto_Sans_CJK_SC',sans-serif] text-[12px] leading-4 text-[#222]">
      <header className="flex h-4 shrink-0 items-center overflow-hidden bg-linear-to-b from-[#9db9d5] to-[#b4cce4]">
        <Svg w={14} h={16}><circle cx="6" cy="5" r="8" fill="#d8301c" /><path d="M4 11c2-1 2-3 3-6 .5-2 2-3 4-3M4 6h5" stroke="#fff" strokeWidth="1.700" /></Svg>
        <h1 className="-mt-[5px] ml-2 text-black">Macromedia Flash Professional 8 - [简单动画*]</h1>
        <div className="ml-auto flex self-start">
          <button aria-label="最小化" className="mr-[3px] flex h-[13px] w-[31px] items-center justify-center rounded-b-sm border border-t-0 border-[#7088a4] bg-[#b7cde4]"><Svg w={12} h={6}><path d="M1 1h10v3H1z" fill="#fff" stroke="#556" /></Svg></button>
          <button aria-label="还原" className="mr-[3px] flex h-[13px] w-[31px] items-center justify-center rounded-b-sm border border-t-0 border-[#7088a4] bg-[#b7cde4]"><Svg w={13} h={11}><path d="M4 1h8v6H4z" fill="#fff" stroke="#556" /><path d="M1 3h7v6H1z" fill="#fff" stroke="#556" /><path d="M3.500 5.500h2v1h-2z" stroke="#556" /></Svg></button>
          <button aria-label="关闭" className="flex h-[13px] w-[21px] items-center justify-end rounded-bl-sm border border-t-0 border-r-0 border-[#6c2418] bg-linear-to-b from-[#d4705c] to-[#c23a22]"><Svg w={12} h={10}><path d="M2 1l8 8M10 1L2 9" stroke="#fff" strokeWidth="2.400" /></Svg></button>
        </div>
      </header>
      <nav className="flex h-5 shrink-0 items-center gap-4 border-b border-[#aab] bg-linear-to-b from-[#fbfcfe] from-10% to-[#d3dbed] to-60% pl-[3px]">
        {MENUS.map((m) => <button key={m} className="whitespace-nowrap text-black">{m}</button>)}
      </nav>
      <div className="flex min-h-0 flex-1 bg-[#7e7e7e]">
        <Toolbox />
        <div className="w-2 shrink-0 border-r-2 border-[#666] bg-[#909090]" />
        <div className="flex min-w-0 flex-1 flex-col pt-[7px]">
          <DocumentWindow />
          <BottomPanels />
        </div>
        <div className="flex w-1.5 shrink-0 items-center border-l border-[#666] bg-[#8e8e8e]">
          <button aria-label="折叠侧栏" className="h-[49px] w-full bg-[#ddd]"><Svg w={5} h={8}><path d="M1 0v8l4-4z" fill="#fff" /></Svg></button>
        </div>
        <aside className="flex w-[198px] shrink-0 flex-col overflow-hidden pt-px">
          <Mixer />
          <Align />
          <Library />
        </aside>
      </div>
    </div>
  );
}
